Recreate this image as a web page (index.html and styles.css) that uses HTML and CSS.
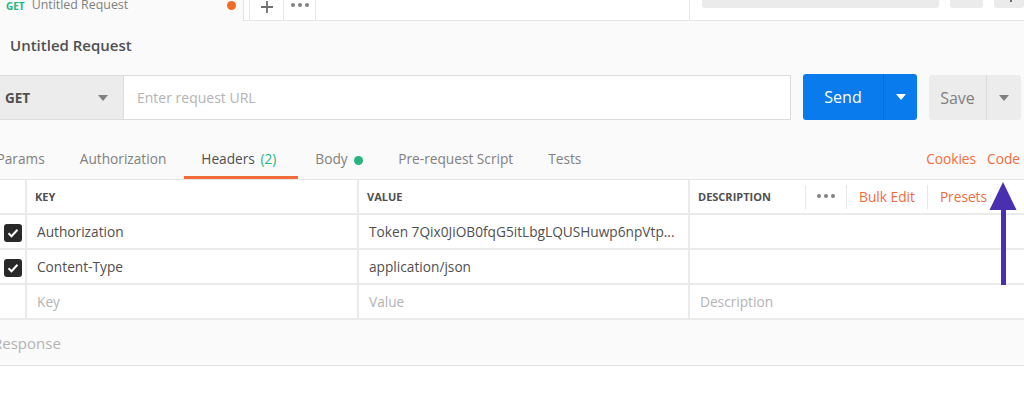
FILE: index.html
```html
<!DOCTYPE html>
<html>
<head>
<meta charset="utf-8">
<link rel="stylesheet" href="styles.css">
</head>
<body>
<div class="page">
  <div class="topbar">
    <div class="tab-active">
      <span class="method">GET</span>
      <span class="tab-name">Untitled Request</span>
      <span class="unsaved-dot"></span>
    </div>
    <div class="tab-gap"></div>
    <div class="tab-btn plus">
      <svg width="14" height="14" viewBox="0 0 14 14"><path d="M7 1v12M1 7h12" stroke="#707070" stroke-width="1.8"/></svg>
    </div>
    <div class="tab-btn dots">
      <span class="dot"></span><span class="dot"></span><span class="dot"></span>
    </div>
    <div class="tab-fill"></div>
    <div class="env-area">
      <div class="env-box env-select"></div>
      <div class="env-box env-eye"></div>
      <div class="env-box env-gear"><span class="env-mark"></span></div>
    </div>
  </div>

  <div class="title">Untitled Request</div>

  <div class="urlbar">
    <div class="method-select">
      <span>GET</span>
      <span class="caret dark"></span>
    </div>
    <div class="url-input">Enter request URL</div>
    <div class="send-btn">
      <span class="send-label">Send</span>
      <span class="send-caret"><span class="caret white"></span></span>
    </div>
    <div class="save-btn">
      <span class="save-label">Save</span>
      <span class="save-caret"><span class="caret grey"></span></span>
    </div>
  </div>

  <div class="tabrow">
    <div class="tabs">
      <div class="tab">Params</div>
      <div class="tab">Authorization</div>
      <div class="tab active">Headers <span class="count">(2)</span></div>
      <div class="tab">Body <span class="body-dot"></span></div>
      <div class="tab">Pre-request Script</div>
      <div class="tab">Tests</div>
    </div>
    <div class="tab-links">
      <span class="link">Cookies</span>
      <span class="link">Code</span>
    </div>
  </div>

  <div class="table">
    <div class="cell chk"></div>
    <div class="cell head">KEY</div>
    <div class="cell head">VALUE</div>
    <div class="cell head desc-head">
      <span class="desc-label">DESCRIPTION</span>
      <span class="sep"></span>
      <span class="more"><span class="dot"></span><span class="dot"></span><span class="dot"></span></span>
      <span class="sep"></span>
      <span class="link">Bulk Edit</span>
      <span class="sep"></span>
      <span class="link">Presets</span>
    </div>

    <div class="cell chk"><span class="checkbox"><svg width="12" height="10" viewBox="0 0 12 10"><path d="M1.5 5.2l3 3 6-6.5" fill="none" stroke="#fff" stroke-width="2"/></svg></span></div>
    <div class="cell">Authorization</div>
    <div class="cell">Token 7Qix0JiOB0fqG5itLbgLQUSHuwp6npVtp...</div>
    <div class="cell"></div>

    <div class="cell chk"><span class="checkbox"><svg width="12" height="10" viewBox="0 0 12 10"><path d="M1.5 5.2l3 3 6-6.5" fill="none" stroke="#fff" stroke-width="2"/></svg></span></div>
    <div class="cell">Content-Type</div>
    <div class="cell">application/json</div>
    <div class="cell"></div>

    <div class="cell chk"></div>
    <div class="cell ph">Key</div>
    <div class="cell ph">Value</div>
    <div class="cell ph">Description</div>
  </div>

  <div class="response"><span class="response-label">Response</span></div>
  <div class="below"></div>

  <svg class="arrow" width="36" height="110" viewBox="0 0 36 110">
    <polygon points="15,2 1.5,30 28.5,30" fill="#4a2fb0"/>
    <rect x="13" y="28" width="5" height="77" fill="#4a2fb0"/>
  </svg>
</div>
</body>
</html>
```

FILE: styles.css
```css
* { box-sizing: border-box; }
html, body { margin: 0; padding: 0; }
body {
  font-family: "Open Sans", "Liberation Sans", sans-serif;
  background: #fafafa;
  color: #505050;
  width: 1024px;
  height: 398px;
  overflow: hidden;
}
.page { position: relative; width: 1024px; height: 398px; overflow: hidden; }

/* top bar */
.topbar { display: flex; height: 21px; }
.tab-active {
  width: 244px;
  display: flex;
  align-items: flex-start;
  padding-left: 6px;
  border-right: 1px solid #e3e3e3;
  background: #fafafa;
}
.method { color: #26b47f; font-size: 10px; font-weight: 700; line-height: 12px; }
.tab-name { color: #808080; font-size: 12.4px; line-height: 12px; margin-left: 7px; margin-top: -1px; white-space: nowrap; }
.unsaved-dot {
  width: 9px; height: 9px; border-radius: 50%;
  background: #f26b25;
  margin-left: auto; margin-right: 7px; margin-top: 1px;
}
.tab-gap { width: 5px; background: #fff; border-bottom: 1px solid #e6e6e6; }
.tab-btn {
  height: 21px;
  background: #fff;
  border-left: 1px solid #e6e6e6;
  border-bottom: 1px solid #e6e6e6;
  display: flex; justify-content: center; align-items: flex-start;
}
.tab-btn.plus { width: 34px; }
.tab-btn.dots { width: 33px; border-right: 1px solid #e6e6e6; gap: 3px; padding-top: 3px; }
.dot { width: 4px; height: 4px; border-radius: 50%; background: #808080; display: inline-block; }
.tab-fill { flex: 1; background: #fff; border-bottom: 1px solid #e6e6e6; border-right: 1px solid #e6e6e6; }
.env-area {
  width: 334px; background: #fff; border-bottom: 1px solid #e6e6e6;
  display: flex; align-items: flex-start; padding-left: 12px; gap: 11px;
}
.env-box { height: 8px; background: #ebebeb; border-radius: 0 0 3px 3px; position: relative; }
.env-select { width: 241px; }
.env-eye { width: 34px; }
.env-gear { width: 30px; }
.env-mark { position: absolute; left: 16px; top: 0; width: 2px; height: 2px; background: #707070; }

/* title */
.title {
  height: 53px;
  padding: 13px 0 0 10px;
  font-size: 15px;
  font-weight: 600;
  line-height: 22px;
  color: #505050;
}

/* url bar */
.urlbar { display: flex; height: 46px; align-items: stretch; }
.method-select {
  width: 124px;
  margin-top: 1px; height: 45px;
  background: #ececec;
  border: 1px solid #dcdcdc;
  border-left: none;
  display: flex; align-items: center;
  padding-left: 5px; padding-right: 15px;
  font-size: 13.5px; font-weight: 700; color: #505050;
  justify-content: space-between;
}
.caret { width: 0; height: 0; border-left: 5px solid transparent; border-right: 5px solid transparent; border-top: 6px solid #808080; display: inline-block; }
.caret.white { border-top-color: #fff; }
.url-input {
  width: 667px;
  margin-top: 1px; height: 45px;
  background: #fff;
  border: 1px solid #dcdcdc;
  border-left: none;
  display: flex; align-items: center;
  padding-left: 13px;
  font-size: 14px; color: #b3b3b3;
}
.send-btn {
  margin-left: 12px;
  width: 114px;
  background: #097bed;
  border-radius: 3px;
  display: flex;
  color: #fff;
}
.send-label { width: 80px; display: flex; align-items: center; justify-content: center; font-size: 16px; font-weight: 400; }
.send-caret { flex: 1; border-left: 1px solid #0a6ad0; display: flex; align-items: center; justify-content: center; }
.save-btn {
  margin-left: 12px;
  width: 92px;
  margin-top: 1px; height: 45px;
  background: #ececec;
  border-radius: 3px;
  display: flex;
  color: #808080;
}
.save-label { width: 57px; display: flex; align-items: center; justify-content: center; font-size: 16px; font-weight: 400; }
.save-caret { flex: 1; border-left: 1px solid #dcdcdc; display: flex; align-items: center; justify-content: center; }

/* tabs */
.tabrow { display: flex; margin-top: 15px; height: 44px; justify-content: space-between; }
.tabs { display: flex; margin-left: -21px; }
.tab {
  height: 44px;
  padding: 7px 17.5px 0 17.5px;
  line-height: 34px;
  font-size: 13.7px;
  color: #808080;
  border-bottom: 3px solid transparent;
  white-space: nowrap;
}
.tab.active { color: #505050; border-bottom-color: #f26b3a; padding-right: 21.5px; }
.count { color: #26b47f; margin-left: 2px; }
.body-dot { display: inline-block; width: 9px; height: 9px; border-radius: 50%; background: #26b47f; margin-left: 3px; vertical-align: -1px; }
.tab-links { display: flex; gap: 11px; padding-right: 4px; padding-top: 7px; line-height: 34px; }
.link { color: #f26b3a; font-size: 13.7px; }

/* table */
.table {
  display: grid;
  grid-template-columns: 25px 330px 329px 1fr;
  grid-auto-rows: 33px;
  gap: 2px;
  background: #ebebeb;
  border-top: 1px solid #e6e6e6;
  border-bottom: 2px solid #ebebeb;
}
.cell {
  background: #fff;
  display: flex; align-items: center;
  padding-left: 10px;
  font-size: 13.7px;
  color: #505050;
  white-space: nowrap;
  overflow: hidden;
}
.cell.chk { padding-left: 4px; }
.cell.head { font-size: 11px; font-weight: 700; padding-left: 8px; color: #505050; }
.cell.ph { color: #b3b3b3; }
.checkbox {
  width: 18px; height: 18px; border-radius: 3px;
  background: #282828;
  display: flex; align-items: center; justify-content: center;
  margin-top: 3px;
}
.desc-head { padding-right: 37px; }
.desc-label { flex: 1; }
.sep { width: 1px; height: 24px; background: #e6e6e6; }
.more { display: flex; gap: 3px; margin: 0 11px 2px 11px; }
.desc-head .link { font-size: 13.7px; font-weight: 400; margin: 0 12px; }
.desc-head .link:last-child { margin-right: 0; }

/* response */
.response {
  height: 46px;
  border-bottom: 1px solid #e3e3e3;
  display: flex; align-items: center;
}
.response-label {
  margin-left: -7px;
  font-size: 15px;
  color: #b3b3b3;
}
.below { height: 40px; background: #fff; }

.arrow { position: absolute; left: 988px; top: 180px; }
```
